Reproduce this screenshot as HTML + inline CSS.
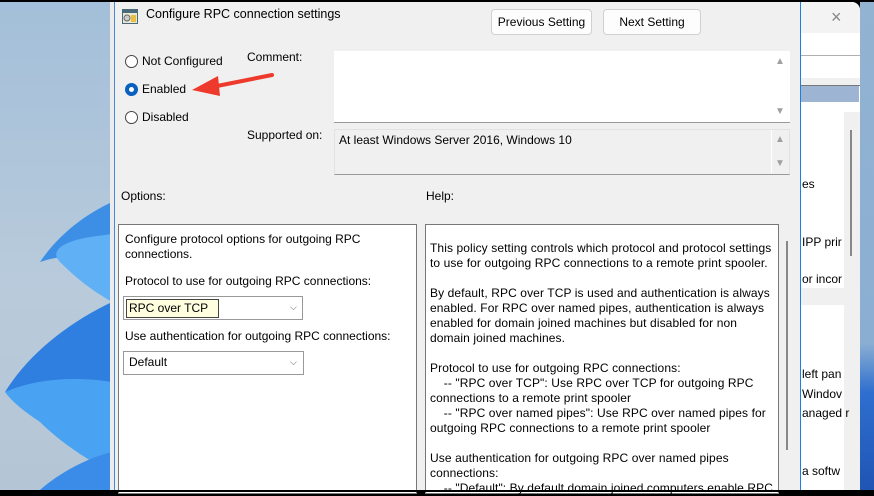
<!DOCTYPE html>
<html><head><meta charset="utf-8"><style>
*{margin:0;padding:0;box-sizing:border-box}
body{width:874px;height:492px;overflow:hidden;background:#000;position:relative;font-family:"Liberation Sans",sans-serif;font-size:12px;color:#000}
.a{position:absolute}
.t{white-space:nowrap;letter-spacing:0}
.btn{position:absolute;background:#fdfdfd;border:1px solid #d0d0d0;border-radius:4px;text-align:center;line-height:24px;font-size:12px}
.radio{position:absolute;width:13px;height:13px;border:1px solid #444;border-radius:50%;background:#fff}
.sb{position:absolute;color:#a0a0a0;font-size:10px}
</style></head><body>
<div class="a" style="left:0;top:2px;width:112px;height:488px;background:linear-gradient(#a3bfd9,#b9cbdb 60%,#b4c6d6)"></div>
<svg class="a" style="left:0;top:2px" width="112" height="488">
<path d="M112 200 C90 210 60 230 40 260 C70 250 95 255 112 270Z" fill="#3d8fe6"/>
<path d="M60 260 C50 250 60 240 90 235 L112 232 L112 300 C95 290 80 280 60 260Z" fill="#5fb0f5"/>
<path d="M112 300 C70 320 30 350 5 390 C40 380 80 380 112 385Z" fill="#2f7fe0"/>
<path d="M5 390 C40 375 80 375 112 380 L112 470 C90 460 60 440 40 420 C25 410 12 400 5 390Z" fill="#4aa3f2"/>
<path d="M40 488 C60 470 90 455 112 450 L112 488Z" fill="#3a8ce8"/>
</svg>
<div class="a" style="left:860px;top:2px;width:14px;height:488px;background:linear-gradient(#93b3d2,#8aaed2 70%,#2f6fcf 80%,#1f55b5)"></div>
<div class="a" style="left:800px;top:2px;width:60px;height:488px;background:#fff;border-left:1px solid #1a7fe0;border-top-right-radius:8px;overflow:hidden">
 <div class="a" style="left:0;top:0;width:60px;height:31px;background:#f3f3f3"></div>
 <div class="a t" style="left:30px;top:5px;font-size:18px;color:#888">×</div>
 <div class="a" style="left:0;top:53px;width:60px;height:1px;background:#b0b0b0"></div>
 <div class="a" style="left:0;top:76px;width:60px;height:8px;background:#f0f0f0;border-bottom:1px solid #777"></div>
 <div class="a" style="left:0;top:84px;width:58px;height:16px;background:#9db5d3"></div>
 <div class="a" style="left:43px;top:110px;width:17px;height:380px;background:#f0f0f0"></div>
 <div class="a" style="left:49px;top:128px;width:2px;height:126px;background:#888"></div>
 <div class="a" style="left:0;top:286px;width:43px;height:17px;background:#f0f0f0"></div>
 <div class="a t" style="left:1px;top:175px">es</div>
 <div class="a t" style="left:1px;top:233px">IPP prir</div>
 <div class="a t" style="left:1px;top:270px">or incor</div>
 <div class="a t" style="left:1px;top:365px">left pan</div>
 <div class="a t" style="left:1px;top:385px">Windov</div>
 <div class="a t" style="left:1px;top:404px">anaged r</div>
 <div class="a t" style="left:1px;top:462px">a softw</div>
</div>
<div class="a" style="left:110px;top:2px;width:690px;height:488px;background:#f0f0f0;border-left:4px solid #ececec">
 <div class="a" style="left:0;top:0;width:1px;height:488px;background:#d8d8d8"></div>
</div>
<div class="a" style="left:114px;top:2px;width:1px;height:488px;background:#4a88d0"></div>
<svg class="a" style="left:122px;top:8px" width="16" height="16"><rect x="0" y="1" width="16" height="15" fill="#4a6a7a"/><rect x="1" y="5" width="14" height="10" fill="#e8e8d8"/><circle cx="5" cy="10" r="3" fill="#ccc" stroke="#666"/><rect x="9" y="7" width="5" height="7" fill="#e8c040"/></svg>
<div class="a t" style="left:146px;top:7px;font-size:12.5px">Configure RPC connection settings</div>
<div class="btn t" style="left:491px;top:9px;width:101px;height:26px">Previous Setting</div>
<div class="btn t" style="left:603px;top:9px;width:98px;height:26px">Next Setting</div>

<div class="radio" style="left:125px;top:55px"></div><div class="a t" style="left:142px;top:54px">Not Configured</div>
<div class="radio" style="left:125px;top:83px;border:4px solid #0a5fc0"></div><div class="a t" style="left:142px;top:82px">Enabled</div>
<div class="radio" style="left:125px;top:111px"></div><div class="a t" style="left:142px;top:110px">Disabled</div>
<svg class="a" style="left:190px;top:70px" width="86" height="30"><path d="M82 5 L22 17" stroke="#ee3a2c" stroke-width="4" stroke-linecap="round"/><path d="M2 20 L28 6 L30 26Z" fill="#ee3a2c"/></svg>

<div class="a t" style="left:247px;top:50px">Comment:</div>
<div class="a t" style="left:247px;top:128px">Supported on:</div>
<div class="a" style="left:334px;top:51px;width:456px;height:72px;background:#fff;border-bottom:1px solid #999"></div>
<div class="sb" style="left:775px;top:56px">▲</div><div class="sb" style="left:775px;top:106px">▼</div>
<div class="a" style="left:334px;top:129px;width:456px;height:46px;background:#f0f0f0;border:1px solid #e2e2e2;border-bottom:1px solid #999"></div>
<div class="a" style="left:771px;top:130px;width:1px;height:43px;background:#fff"></div>
<div class="sb" style="left:775px;top:134px">▲</div><div class="sb" style="left:775px;top:158px">▼</div>
<div class="a t" style="left:339px;top:133px">At least Windows Server 2016, Windows 10</div>

<div class="a t" style="left:121px;top:189px">Options:</div>
<div class="a t" style="left:426px;top:189px">Help:</div>

<div class="a" style="left:118px;top:224px;width:299px;height:270px;background:#fff;border:1px solid #777"></div>
<div class="a t" style="left:125px;top:232px;line-height:15px">Configure protocol options for outgoing RPC<br>connections.</div>
<div class="a t" style="left:125px;top:274px">Protocol to use for outgoing RPC connections:</div>
<div class="a" style="left:123px;top:296px;width:180px;height:24px;border:1px solid #999;background:#fff"></div>
<div class="a t" style="left:126px;top:299px;width:93px;height:19px;background:#ffffe0;border:1px solid #444;line-height:17px;padding-left:2px">RPC over TCP</div>
<div class="a" style="left:290px;top:302px;font-size:9px;color:#555">⌵</div>
<div class="a t" style="left:125px;top:329px">Use authentication for outgoing RPC connections:</div>
<div class="a" style="left:123px;top:351px;width:181px;height:24px;border:1px solid #999;background:#fff"></div>
<div class="a t" style="left:129px;top:355px">Default</div>
<div class="a" style="left:290px;top:357px;font-size:9px;color:#555">⌵</div>

<div class="a" style="left:425px;top:224px;width:354px;height:270px;background:#fff;border:1px solid #777"></div>
<div class="a t" style="left:430px;top:241px;line-height:15px;letter-spacing:0.1px">This policy setting controls which protocol and protocol settings<br>to use for outgoing RPC connections to a remote print spooler.<br><br>By default, RPC over TCP is used and authentication is always<br>enabled. For RPC over named pipes, authentication is always<br>enabled for domain joined machines but disabled for non<br>domain joined machines.<br><br>Protocol to use for outgoing RPC connections:<br>&nbsp;&nbsp;&nbsp; -- "RPC over TCP": Use RPC over TCP for outgoing RPC<br>connections to a remote print spooler<br>&nbsp;&nbsp;&nbsp; -- "RPC over named pipes": Use RPC over named pipes for<br>outgoing RPC connections to a remote print spooler<br><br>Use authentication for outgoing RPC over named pipes<br>connections:<br>&nbsp;&nbsp;&nbsp; -- "Default": By default domain joined computers enable RPC</div>
<div class="a" style="left:786px;top:241px;width:2px;height:209px;background:#888"></div>
<div class="a" style="left:0;top:490px;width:874px;height:2px;background:#000"></div>
</body></html>
